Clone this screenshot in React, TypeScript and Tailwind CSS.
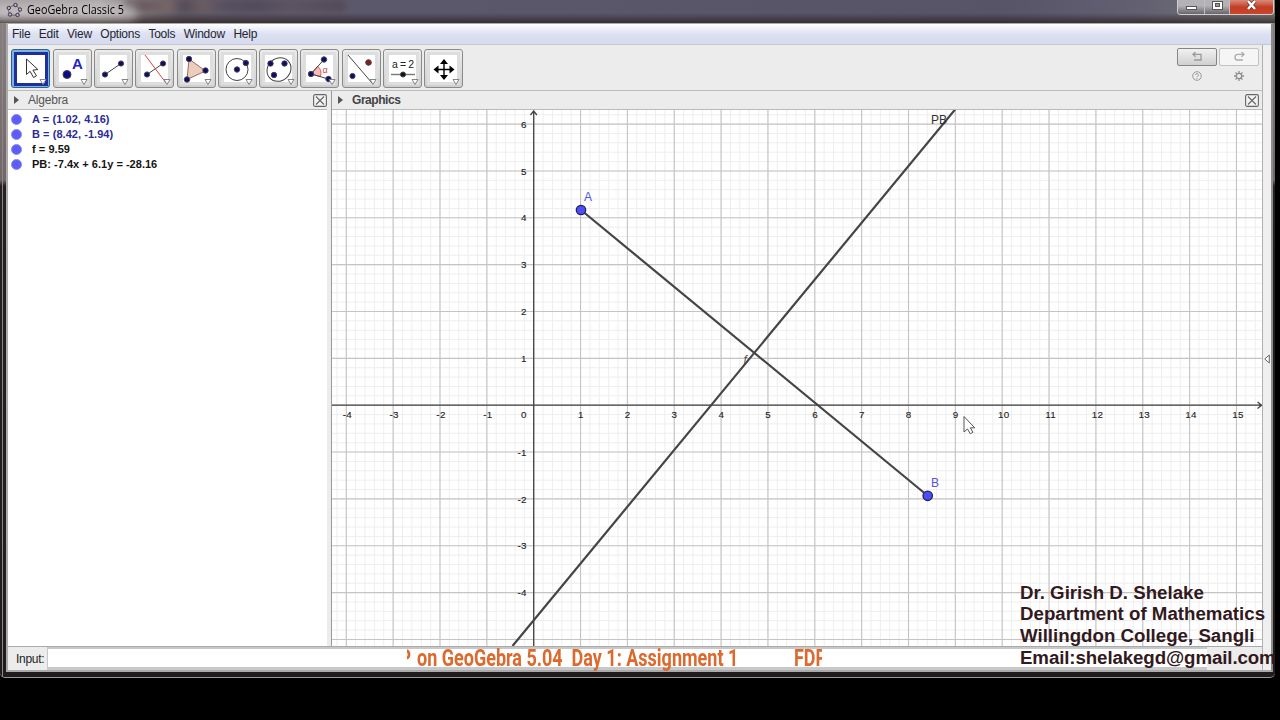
import React from "react";

const OX = 533.7;
const OY = 405.2;
const U = 46.85;
const px = (x: number) => OX + x * U;
const py = (y: number) => OY - y * U;
const range = (a: number, b: number) => Array.from({ length: b - a + 1 }, (_, i) => a + i);

function Dot({ x, y, r = 2.6, c = "#0b0b73" }: { x: number; y: number; r?: number; c?: string }) {
  return <circle cx={x} cy={y} r={r} fill={c} />;
}

function Tool({ children, active = false }: { children: React.ReactNode; active?: boolean }) {
  return (
    <div
      className={
        active
          ? "flex h-[39px] w-[39px] items-center justify-center rounded-[3px] border border-[#2c628b] bg-[#7fb4dc]"
          : "flex h-[39px] w-[39px] items-center justify-center rounded-[3px] border border-[#8a8a8a] bg-gradient-to-b from-[#ececec] to-[#cfcfcf]"
      }
    >
      <div
        className={
          active
            ? "flex h-[34px] w-[34px] items-center justify-center border-[3px] border-[#1d2fa0] bg-white"
            : "flex h-[33px] w-[33px] items-center justify-center border-[3px] border-[#dedede] bg-white"
        }
      >
        <svg className="h-[34px] w-[34px] shrink-0" viewBox="0 0 34 34" fill="none" stroke="#444" strokeWidth="1">
          {children}
          <path d="M26 27.5h6l-3 5z" fill="#fff" stroke="#777" strokeWidth=".9" />
        </svg>
      </div>
    </div>
  );
}

function Toolbar() {
  return (
    <div className="flex gap-[2.3px] pl-[3.4px] pt-[4px]">
      <Tool active>
        <path d="M12.5 7v15.5l3.6-3.2 3.4 6.2 3-1.7-3.6-5.7 5-.6z" fill="#fff" stroke="#333" />
      </Tool>
      <Tool>
        <Dot x={12} y={22.5} r={4} c="#0a0a8c" />
        <text x="17" y="17" fontSize="15" fontWeight="bold" fontFamily="Liberation Sans, sans-serif" fill="#2424c8" stroke="none">A</text>
      </Tool>
      <Tool>
        <path d="M9 22.5 25 11.5" />
        <Dot x={9} y={22.5} /><Dot x={25} y={11.5} />
      </Tool>
      <Tool>
        <path d="M9 22.5 25 11.5" />
        <path d="M7 3 28 31" stroke="#d84545" />
        <Dot x={9} y={22.5} /><Dot x={25} y={11.5} />
      </Tool>
      <Tool>
        <path d="M10 7 26.5 19 8 27.5z" fill="#eccdbd" stroke="#a56a50" />
        <Dot x={10} y={7} r={2.7} /><Dot x={26.5} y={18.5} r={2.7} /><Dot x={8} y={27.5} r={2.7} />
      </Tool>
      <Tool>
        <circle cx="17" cy="17.5" r="11" />
        <Dot x={17} y={17.5} r={2.7} /><Dot x={25.8} y={11} r={2.7} />
      </Tool>
      <Tool>
        <ellipse cx="17" cy="17.5" rx="12.6" ry="11.2" transform="rotate(-42 17 17.5)" />
        <Dot x={8.5} y={11.5} r={2.7} /><Dot x={22.5} y={11.5} r={2.7} /><Dot x={12} y={23} r={2.7} />
      </Tool>
      <Tool>
        <path d="M8 22 14.7 14.2A10 10 0 0 1 17.5 24.5z" fill="#f9b9b9" stroke="#d06060" />
        <path d="M21 7.5 8 22 25.5 27" />
        <Dot x={21} y={7.5} r={2.7} /><Dot x={8} y={22} r={2.7} /><Dot x={25.5} y={27} r={2.7} />
        <text x="19.5" y="21" fontSize="9" fontFamily="Liberation Sans, sans-serif" fill="#c44" stroke="none">α</text>
      </Tool>
      <Tool>
        <path d="M4 3 28 31" />
        <Dot x={24.5} y={10.5} r={2.8} c="#8b1a1a" /><Dot x={8.5} y={24} r={2.6} />
      </Tool>
      <Tool>
        <text x="6" y="16" fontSize="10.5" fontFamily="Liberation Sans, sans-serif" fill="#222" stroke="none" textLength="22">a = 2</text>
        <path d="M5 22.5h24" strokeWidth="1.4" stroke="#777" />
        <Dot x={17} y={22.5} r={2.5} c="#111" />
      </Tool>
      <Tool>
        <path d="M17 10v15M9.5 17.5h15" stroke="#000" strokeWidth="1.4" />
        <path d="M17 7l4 5h-8zM17 28l4-5h-8zM6.5 17.5l5-4v8zM27.5 17.5l-5-4v8z" fill="#000" stroke="none" />
      </Tool>
    </div>
  );
}

function CloseBox() {
  return (
    <svg className="h-[13px] w-[14px]" viewBox="0 0 14 13" fill="none" stroke="#666" strokeWidth="1.1">
      <rect x=".6" y=".6" width="12.8" height="11.8" rx="1.5" fill="#f3f3f3" />
      <path d="M3 2.5l8 8M11 2.5l-8 8" />
    </svg>
  );
}

function PanelHeader({ title, main = false }: { title: string; main?: boolean }) {
  return (
    <div className="flex h-[19px] shrink-0 items-center border-b border-[#b9b9b9] bg-[#ececec] pl-[6px]">
      <svg className="h-2 w-[5px]" viewBox="0 0 5 8"><path d="M0 0l5 4-5 4z" fill="#555" /></svg>
      <span className={main ? "ml-[9px] text-[12px] font-bold tracking-[-0.45px] text-[#444]" : "ml-[9px] text-[12px] tracking-[-0.2px] text-[#555]"}>{title}</span>
      <span className={main ? "ml-auto mr-[3px]" : "ml-auto"}><CloseBox /></span>
    </div>
  );
}

function Plot() {
  return (
    <svg className="block h-[536px] w-[930px]" viewBox="332 110 930 536">
      <rect x="332" y="110" width="930" height="536" fill="#fff" />
      <g stroke="#eeeeee" strokeWidth="1">
        {range(-21, 77).map((i) => <path key={i} d={`M${px(i / 5)} 110V646`} />)}
        {range(-25, 31).map((i) => <path key={i} d={`M332 ${py(i / 5)}H1262`} />)}
      </g>
      <g stroke="#c4c4c4" strokeWidth="1.1">
        {range(-4, 15).map((i) => <path key={i} d={`M${px(i)} 110V646`} />)}
        {range(-5, 6).map((i) => <path key={i} d={`M332 ${py(i)}H1262`} />)}
      </g>
      <g stroke="#444" strokeWidth="1.3" fill="none">
        <path d="M533.7 646V111M530.5 115l3.2-4 3.2 4" />
        <path d="M332 405.2H1261M1257.5 402l4 3.2-4 3.2" />
      </g>
      <g fontFamily="Liberation Sans, sans-serif" fontSize="9.8" fill="#222" stroke="#222" strokeWidth=".12">
        {range(-4, 15).filter((i) => i !== 0).map((i) => (
          <text key={i} x={px(i) + (i > 9 ? 1.5 : i < 0 ? 1 : 0.2)} y="418.3" textAnchor="middle" letterSpacing=".3">{i}</text>
        ))}
        <text x="526.5" y="418.3" textAnchor="end">0</text>
        {range(-4, 6).filter((i) => i !== 0).map((i) => (
          <text key={i} x="526.8" y={py(i) + 3.6} textAnchor="end" letterSpacing=".3">{i}</text>
        ))}
      </g>
      <g stroke="#444" strokeWidth="2.2">
        <path d="M581 210 928 496" />
        <path d="M955.5 109 512.5 646" />
      </g>
      <g fontFamily="Liberation Sans, sans-serif" fontSize="12">
        <text x="931" y="123.5" fill="#333">PB</text>
        <text x="743.5" y="363.5" fill="#555" fontStyle="italic">f</text>
        <text x="584" y="200.5" fill="#5656d8">A</text>
        <text x="931" y="486.5" fill="#5656d8">B</text>
      </g>
      <g fill="#4d4dff" stroke="#22224d" strokeWidth="1.3">
        <circle cx="581" cy="210" r="4.7" />
        <circle cx="927.7" cy="495.8" r="4.7" />
      </g>
      <path d="M964 416.500v15.5l3.5-3 2.8 4.8 2.6-1.5-2.500-4.500h4.3z" fill="#fff" stroke="#555" strokeWidth="1" />
    </svg>
  );
}

function Logo() {
  return (
    <svg className="h-4 w-[16px]" viewBox="0 0 16 16" fill="#bbb8c8" stroke="#343044" strokeWidth="1">
      <ellipse cx="8" cy="8.5" rx="5.5" ry="4.8" fill="none" stroke="#69637a" />
      <circle cx="9.5" cy="3" r="1.7" /><circle cx="14" cy="7.5" r="1.7" /><circle cx="11.5" cy="13" r="1.7" /><circle cx="4" cy="12.5" r="1.7" /><circle cx="2.8" cy="6" r="1.7" />
    </svg>
  );
}

function TitleBar() {
  return (
    <div className="relative flex h-[23px] shrink-0 overflow-hidden bg-[linear-gradient(to_right,#a49da0_0,#aaa5a6_100px,#7b7477_145px,#605b69_180px,#5c586b_330px,#59566a_700px,#575468_1000px,#626071_1140px,#777_1272px)]">
      <div className="absolute left-[125px] top-0 h-3 w-[220px] bg-[linear-gradient(to_right,#4b3f4b,#806763_20%,#4e4350_27%,#74605e_35%,#544b5d_45%,#4b4555_60%,#5d525d_75%,#504450)] opacity-70 blur-[3px]" />
      <div className="absolute inset-x-0 bottom-0 h-[10px] bg-gradient-to-b from-transparent to-[#302324] opacity-80" />
      <div className="absolute -left-2 top-1 h-4 w-[145px] rounded-full bg-[#d5d0d1] opacity-60 blur-[5px]" />
      <div className="relative flex h-[20px] items-center pl-[6px]">
        <Logo />
        <span className="ml-[5px] origin-left scale-x-[0.9] whitespace-nowrap font-['Open_Sans',sans-serif] text-[12px] text-black">GeoGebra Classic 5</span>
      </div>
      <div className="relative ml-auto mr-[1px] flex h-[15px] w-[97px] overflow-hidden rounded-b-[4px] border border-t-0 border-[#d0cdd0] bg-[#777]">
        <div className="flex w-[27px] items-center justify-center border-r border-[#c0bdc0] bg-gradient-to-b from-[#b4b2b7] from-40% to-[#68656b]">
          <div className="mt-[2px] h-[4px] w-[11px] border border-[#555] bg-white" />
        </div>
        <div className="flex w-[25px] items-center justify-center border-r border-[#c0bdc0] bg-gradient-to-b from-[#b4b2b7] from-40% to-[#68656b]">
          <div className="mb-1 flex h-[9px] w-[11px] items-center justify-center border border-[#555] bg-white"><div className="h-[4px] w-[5px] border border-[#555] bg-[#999]" /></div>
        </div>
        <div className="flex flex-1 items-center justify-center bg-gradient-to-b from-[#d88b7b] via-[#c33d25] to-[#cd4528]">
          <svg className="mb-1 h-[10px] w-[11px]" viewBox="0 0 11 10"><path d="M2 1l7 8M9 1L2 9" stroke="#633" strokeWidth="4" /><path d="M2 1l7 8M9 1L2 9" stroke="#fff" strokeWidth="2.5" /></svg>
        </div>
      </div>
    </div>
  );
}

function Actions() {
  return (
    <div className="ml-auto grid grid-cols-[40px_40px] content-start gap-x-[2px] pr-[3px] pt-[3px]">
      <div className="flex h-[18px] items-center justify-center rounded-[2px] border border-[#858585] bg-gradient-to-b from-[#f1f1f1] to-[#d0d0d0]">
        <svg className="h-[10px] w-[11px]" viewBox="0 0 11 10" fill="none" stroke="#999" strokeWidth="1.3"><path d="M3.5 0L1 2.3l2.5 2.4M1 2.3h8V8H2" /></svg>
      </div>
      <div className="flex h-[18px] items-center justify-center rounded-[2px] border border-[#c2c2c2] bg-[#f5f5f5]">
        <svg className="h-[10px] w-[11px]" viewBox="0 0 11 10" fill="none" stroke="#aaa" strokeWidth="1.3"><path d="M7.5 0L10 2.3 7.500 4.7M10 2.300H3.800a2.800 2.800 0 0 0 0 5.700H9" /></svg>
      </div>
      <div className="flex h-[20px] items-center justify-center">
        <svg className="h-[10px] w-[10px]" viewBox="0 0 10 10" fill="none" stroke="#999" strokeWidth="1"><circle cx="5" cy="5" r="4.3" /><path d="M3.6 4a1.4 1.4 0 1 1 2.1 1.2q-.7.4-.7 1.1M5 7.1v.9" /></svg>
      </div>
      <div className="flex h-[20px] items-center justify-center">
        <svg className="h-[10px] w-[10px]" viewBox="0 0 10 10" fill="none" stroke="#8d8d8d"><circle cx="5" cy="5" r="2.7" strokeWidth="1.3" /><path d="M5 0v2M5 8v2M0 5h2M8 5h2M1.5 1.5l1.4 1.4M7.1 7.1l1.4 1.4M1.5 8.5l1.4-1.4M7.1 2.9l1.4-1.4" strokeWidth="1.3" /></svg>
      </div>
    </div>
  );
}

function AlgebraRow({ text, className }: { text: string; className: string }) {
  return (
    <div className="flex h-[15px] items-center">
      <span className="h-[11px] w-[11px] rounded-full border border-[#8b8bf2] bg-[#5c5cfa]" />
      <span className={className}>{text}</span>
    </div>
  );
}

export default function App() {
  return (
    <div className="relative h-[720px] w-[1280px] overflow-hidden bg-black font-['Liberation_Sans',Arial,sans-serif]">
      <div className="flex h-[678px] w-[1275px] flex-col rounded-b-[5px] border-b border-[#999] bg-[linear-gradient(to_bottom,#8a8283_0,#716769_180px,#261f20_186px,#211b1c_100%)]">
        <TitleBar />
        <div className="ml-[2px] flex min-h-0 flex-1 border-l border-[#8b8586] pb-[5px] pl-[3px]">
          <div className="flex w-[1267px] flex-col border-2 border-t border-[#aaa] border-r-[#8c8c8c] bg-[#ececec]">
            <nav className="flex h-[21px] shrink-0 items-center gap-[8.5px] border-b border-[#c8c8d0] bg-gradient-to-b from-white via-[#dde1f1] to-[#d6daee] pl-[4px] text-[12px] tracking-[-0.25px] text-[#252532]">
              {["File", "Edit", "View", "Options", "Tools", "Window", "Help"].map((m) => <span key={m}>{m}</span>)}
            </nav>
            <div className="flex min-h-0 flex-1">
              <div className="flex w-[1255px] flex-col border-r border-[#b0b0b0]">
                <div className="flex h-[46px] shrink-0 border-b border-[#bcbcbc]">
                  <Toolbar />
                  <Actions />
                </div>
                <div className="flex h-[555px] shrink-0">
                  <section className="flex w-[319px] flex-col">
                    <PanelHeader title="Algebra" />
                    <div className="flex-1 bg-white pl-[3px] pt-[2px]">
                      <AlgebraRow text="A = (1.02, 4.16)" className="ml-[10px] text-[11px] font-bold tracking-[0.08px] text-[#2b2b96]" />
                      <AlgebraRow text="B = (8.42, -1.94)" className="ml-[10px] text-[11px] font-bold tracking-[0.05px] text-[#2b2b96]" />
                      <AlgebraRow text="f = 9.59" className="ml-[10px] text-[11px] font-bold tracking-[0.05px] text-[#151515]" />
                      <AlgebraRow text="PB: -7.4x + 6.1y = -28.16" className="ml-[10px] text-[11px] font-bold tracking-[0.02px] text-[#151515]" />
                    </div>
                  </section>
                  <div className="w-[5px] border-r border-[#999] bg-[#ececec]" />
                  <section className="flex w-[930px] flex-col">
                    <PanelHeader title="Graphics" main />
                    <Plot />
                  </section>
                </div>
                <div className="flex min-h-0 flex-1 items-stretch border-t border-[#aaa]">
                  <label className="flex w-[39px] items-center pl-[8px] pt-px text-[12px] tracking-[-0.3px] text-[#222]">Input:</label>
                  <div className="w-[1160px] border-b-[3px] border-l border-t-2 border-[#c8c8c8] bg-white" />
                </div>
              </div>
              <div className="flex flex-1 items-start justify-center bg-[#efefef] pt-[309px]">
                <svg className="h-[10px] w-[6px]" viewBox="0 0 6 10"><path d="M5.3 1v8L.8 5z" fill="#fff" stroke="#666" /></svg>
              </div>
            </div>
          </div>
        </div>
      </div>

      <div className="absolute left-[407px] top-[642.5px] h-[30px] w-[415px] overflow-hidden font-[Roboto,sans-serif] text-[24.5px] font-bold leading-[29px] text-[#dc692d]">
        <span className="absolute -left-[29px] top-0 origin-left scale-x-[0.73] whitespace-pre">FDP</span>
        <span className="absolute left-[10px] top-0 origin-left scale-x-[0.735] whitespace-pre">on GeoGebra 5.04  Day 1: Assignment 1</span>
        <span className="absolute left-[387px] top-0 origin-left scale-x-[0.73] whitespace-pre">FDP</span>
      </div>

      <div className="absolute left-[1020px] top-[581.5px] w-[255px] overflow-hidden whitespace-nowrap text-[18.7px] font-bold leading-[21.7px] text-[#32191d]">
        <p>Dr. Girish D. Shelake</p>
        <p>Department of Mathematics</p>
        <p>Willingdon College, Sangli</p>
        <p className="tracking-[-0.1px]">Email:shelakegd@gmail.com</p>
      </div>
    </div>
  );
}
